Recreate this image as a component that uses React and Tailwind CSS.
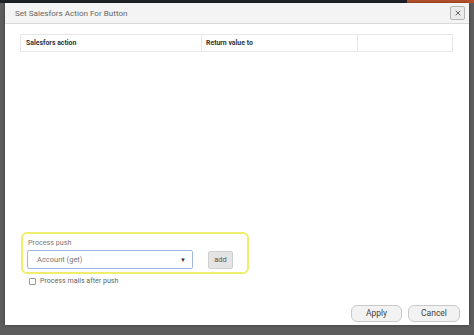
import { X } from 'lucide-react';

export default function App() {
    return (
        <div className="w-[474px] h-[335px] bg-[#5d5d5d] flex flex-col overflow-hidden" style={{ fontFamily: 'Roboto, "Noto Sans", sans-serif' }}>
            {/* top strip of the page behind */}
            <div className="h-[3px] flex shrink-0">
                <div className="w-[407px] bg-[#1d2227]" />
                <div className="flex-1 bg-[#b5522c]" />
            </div>

            {/* dialog */}
            <div className="ml-[5px] w-[464px] h-[322px] bg-white flex flex-col shadow-[0_0_3px_rgba(0,0,0,0.4)]">
                <div className="h-[21px] bg-[#f4f4f4] border-b border-[#d9d9d9] flex items-center justify-between pl-[10px] pr-[4px] shrink-0">
                    <span className="text-[8.1px] text-[#666]">Set Salesfors Action For Button</span>
                    <button className="w-[15px] h-[14px] bg-[#ebebeb] border border-[#b5b5b5] rounded-[2px] flex items-center justify-center text-[#666]">
                        <X className="w-[8px] h-[8px]" strokeWidth={3} />
                    </button>
                </div>

                <div className="flex flex-col px-[15px] pt-[10px]">
                    <div className="h-[18px] flex border border-[#e8e8e8] text-[6.9px] text-[#333] w-[433px]">
                        <div className="w-[181px] border-r border-[#e8e8e8] flex items-center pl-[5px] font-bold">Salesfors action</div>
                        <div className="w-[156px] border-r border-[#e8e8e8] flex items-center pl-[4px] font-bold">Return value to</div>
                        <div className="flex-1" />
                    </div>

                    <div className="w-[228px] h-[42px] mt-[180px] ml-[1px] border-2 border-[#eeee6a] rounded-[6px] px-[4px] pt-[3px]">
                        <div className="text-[7.2px] text-[#777] leading-[12px] pl-[1px]">Process push</div>
                        <div className="flex items-center mt-[1px]">
                            <div className="w-[166px] h-[19px] border border-[#9fb6de] rounded-[2px] flex items-center justify-between pl-[9px] pr-[6px] bg-white">
                                <span className="text-[7.5px] text-[#777]">Account (get)</span>
                                <span className="text-[6px] text-[#333]">▼</span>
                            </div>
                            <button className="ml-[15px] w-[25px] h-[18px] bg-[#e4e4e4] border border-[#cfcfcf] rounded-[2px] text-[7.5px] text-[#555] flex items-center justify-center">add</button>
                        </div>
                    </div>

                    <div className="flex items-center h-[8px] mt-[3px] ml-[9px] gap-[4px]">
                        <div className="w-[7px] h-[7px] border border-[#999] rounded-[1px] bg-white" />
                        <span className="text-[7.1px] text-[#666]">Process mails after push</span>
                    </div>

                    <div className="flex justify-end gap-[6px] mt-[20px] -mr-[6px]">
                        <button className="w-[51px] h-[17px] bg-[#f2f2f2] border border-[#c9c9c9] rounded-[6px] text-[8.5px] text-[#444]">Apply</button>
                        <button className="w-[52px] h-[17px] bg-[#f2f2f2] border border-[#c9c9c9] rounded-[6px] text-[8.5px] text-[#444]">Cancel</button>
                    </div>
                </div>
            </div>
        </div>
    );
}
